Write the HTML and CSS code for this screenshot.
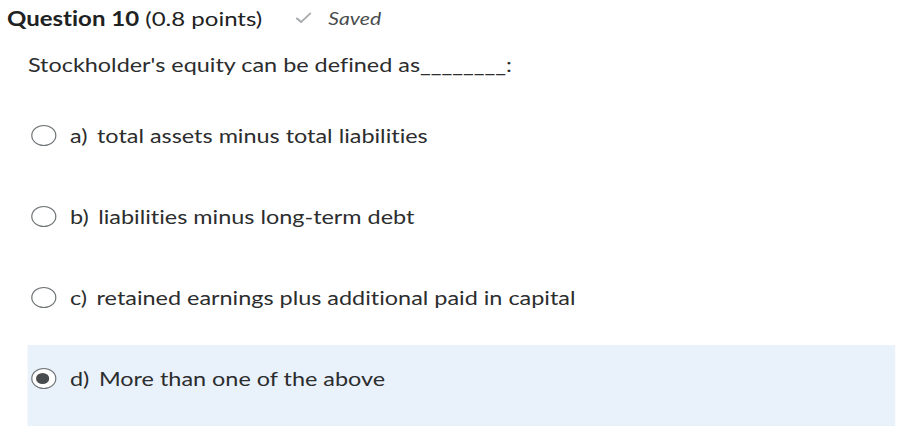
FILE: index.html
```html
<!DOCTYPE html>
<html>
<head>
<meta charset="utf-8">
<link rel="stylesheet" href="styles.css">
</head>
<body>
<div class="page">
  <div class="question">
    <div class="header">
      <span class="title"><b>Question 10</b> (0.8 points)</span>
      <span class="saved">
        <svg class="check" width="14" height="12" viewBox="0 0 14 12"><path d="M1.5 6.5 L5 10 L12.5 1.5" fill="none" stroke="#a9adb0" stroke-width="1.8" stroke-linecap="round" stroke-linejoin="round"/></svg>
        <i>Saved</i>
      </span>
    </div>
    <div class="prompt">Stockholder's equity can be defined as________:</div>
    <div class="options">
      <label class="option"><span class="radio"></span><span class="letter">a)</span><span>total assets minus total liabilities</span></label>
      <label class="option"><span class="radio"></span><span class="letter">b)</span><span>liabilities minus long-term debt</span></label>
      <label class="option"><span class="radio"></span><span class="letter">c)</span><span>retained earnings plus additional paid in capital</span></label>
      <label class="option selected"><span class="radio checked"></span><span class="letter">d)</span><span>More than one of the above</span></label>
    </div>
  </div>
</div>
</body>
</html>
```
FILE: styles.css
```css
html, body { margin: 0; padding: 0; background: #fff; }
body { font-family: Lato, "Noto Sans", sans-serif; color: #2c2d2e; overflow: hidden; font-variant-ligatures: none; font-feature-settings: "liga" 0, "clig" 0, "dlig" 0; }
.page { width: 758px; transform: scaleX(1.2); transform-origin: 0 0; }
.question { padding: 5px 0 0 5.8px; }
.header { display: flex; align-items: center; height: 26px; }
.title { font-size: 20px; color: #202122; }
.title b { font-weight: 700; }
.saved { display: flex; align-items: center; margin-left: 27.5px; color: #494c4e; font-size: 17.7px; }
.check { margin-right: 13.5px; }
.prompt { margin: 21px 0 0 17.5px; font-size: 19.5px; line-height: 26px; }
.options { margin: 24px 0 0 17.5px; width: 723px; display: flex; flex-direction: column; }
.option { display: flex; align-items: center; height: 81px; padding: 0 0 14px 2.5px; font-size: 19.5px; box-sizing: border-box; }
.option.selected { background: #e9f1fa; }
.radio { width: 21px; height: 21px; border: 1px solid #6e7376; border-radius: 50%; box-sizing: border-box; margin-right: 11.5px; background: #fff; position: relative; flex: none; }
.radio.checked { border: 1.5px solid #6e7376; }
.radio.checked::after { content: ""; position: absolute; left: 3.5px; top: 3.5px; width: 11px; height: 11px; border-radius: 50%; background: #494c4e; }
.letter { margin-right: 8px; }
```
